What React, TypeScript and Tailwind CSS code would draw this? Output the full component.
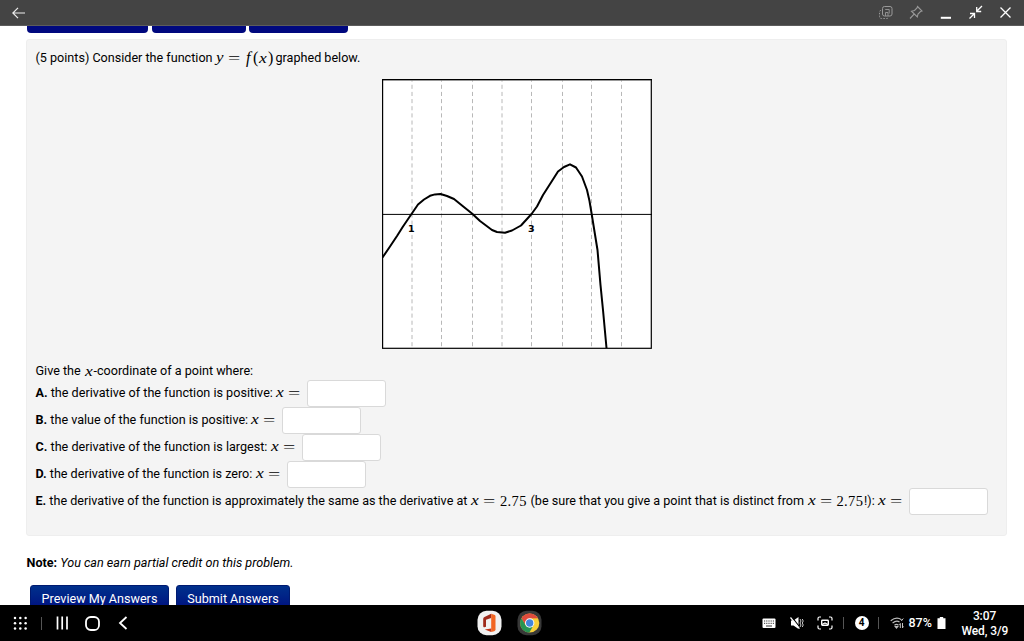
import React from "react";

function X({ className = "" }: { className?: string }) {
  return (
    <span className={"inline-block origin-left scale-x-[1.25] pt-px font-['Liberation_Serif',serif] text-[14px] italic " + className}>x</span>
  );
}

function Eq({ className = "" }: { className?: string }) {
  return (
    <span className={"inline-block origin-left scale-x-[1.55] pt-[2px] font-['Liberation_Serif',serif] text-[14px] " + className}>=</span>
  );
}

function Num({ className = "" }: { className?: string }) {
  return <span className={"shrink-0 font-['Liberation_Serif',serif] text-[14.5px] tracking-[0.35px] " + className}>2.75</span>;
}

type RowProps = { letter: string; text: string; label: string; width: string };

function AnswerRow({ letter, text, label, width }: RowProps) {
  return (
    <div className="flex h-[27px] items-center">
      <div className={"flex shrink-0 items-center pb-[2px] whitespace-pre " + width}>
        <span className="flex-1">
          <b className="font-bold">{letter}.</b> {text}
        </span>
        <X className="w-[12px]" />
        <Eq className="w-[19px]" />
      </div>
      <input aria-label={label} className="h-[27px] w-[79px] rounded-[3px] border border-[#d9d9d9] bg-white outline-none" />
    </div>
  );
}

const gridX = [30, 59.5, 90.5, 120, 149.5, 180.5, 209.5, 239.5];

function Graph() {
  return (
    <svg width="270" height="270" viewBox="0 0 270 270" className="block shrink-0">
      <rect x="0.6" y="0.6" width="268.7" height="268.7" fill="#fff" stroke="#000" strokeWidth="1.2" />
      {gridX.map((x) => (
        <line key={x} x1={x} x2={x} y1="-1.4" y2="268" stroke="#b8b8b8" strokeWidth="1" strokeDasharray="4.1 3.05" />
      ))}
      <path d="M0 .6H270" stroke="#000" strokeWidth="1.2" />
      <line x1="0" x2="270" y1="135.4" y2="135.4" stroke="#000" strokeWidth="1" />
      <path
        d="M.5 178.5L8 167.5L15 157L21 147.5L29.5 135L36 125.5L42 120.5L48 116.8L53 115.4L58.5 115L65 117L72 120L80 126.5L90 134.5L98 142L104 146.5L110 151L115 153L123 153.8L130 151.5L139 146.5L149.5 135L155 127.5L161 116L169 103.5L176 92.5L182 88L188 85.3L194 88.5L200 97.5L205 111L207.5 122L209.5 134L215.5 171L218.5 206L221 231L224.5 269"
        fill="none"
        stroke="#000"
        strokeWidth="2"
        strokeLinejoin="round"
      />
      <text x="29.3" y="153" textAnchor="middle" className="font-['DejaVu_Sans',sans-serif] text-[9.5px] font-bold">1</text>
      <text x="149.3" y="153" textAnchor="middle" className="font-['DejaVu_Sans',sans-serif] text-[9.5px] font-bold">3</text>
    </svg>
  );
}

function TitleBar() {
  return (
    <header className="flex h-[26px] shrink-0 items-center justify-between border-b border-[#5c5c5c] bg-[#444] pr-[11px] pl-[12px]">
      <svg width="14" height="14" viewBox="0 0 14 14" fill="none" stroke="#eee" strokeWidth="1.2">
        <path d="M13 7H1M6 1.8L.8 7L6 12.2" />
      </svg>
      <div className="flex items-center gap-[15px]">
        <svg width="15" height="15" viewBox="0 0 15 15" fill="none" stroke="#999" strokeWidth="1">
          <rect x="4.5" y="1.5" width="9.5" height="9.5" rx="2" />
          <path d="M7.2 4.5H11.2V8.5M7.5 11V7.5H10V11" strokeWidth=".9" />
          <path d="M2.8 5.5Q1.5 5.5 1.5 7V11.5Q1.5 13.5 3.5 13.5H8.5Q10.5 13.5 10.5 12" strokeDasharray="1.5 1.3" />
        </svg>
        <svg width="15" height="15" viewBox="0 0 15 15" fill="none" stroke="#999" strokeWidth="1.1">
          <path d="M9.5 1.5L14 6L12.5 6.5L10 9L9.3 12L3.5 6.2L6.5 5.5L9 3ZM6.1 9.2L2 13.5" />
        </svg>
        <svg width="15" height="15" viewBox="0 0 15 15" stroke="#fff" strokeWidth="2">
          <path d="M2.8 12.8H13" />
        </svg>
        <svg width="15" height="15" viewBox="0 0 15 15" fill="none" stroke="#fff" strokeWidth="1.3">
          <path d="M14 1L8.7 6.3M8.7 2V6.5H13.2M1.5 13.5L6.5 8.5M2 8.5H6.5V13" />
        </svg>
        <svg width="15" height="15" viewBox="0 0 15 15" fill="none" stroke="#fff" strokeWidth="1.3">
          <path d="M2.5 2.5L12.5 12.5M12.5 2.5L2.5 12.5" />
        </svg>
      </div>
    </header>
  );
}

function Taskbar() {
  return (
    <footer className="flex h-[36px] shrink-0 items-center bg-black font-[Roboto,sans-serif] text-white">
      <div className="flex w-[476.5px] items-center pl-[13px]">
        <svg width="15" height="15" viewBox="0 0 15 15" fill="#fff">
          {[2, 7.3, 12.6].flatMap((x) =>
            [2, 7.3, 12.6].map((y) => <circle key={x + "-" + y} cx={x} cy={y} r="1.25" />)
          )}
        </svg>
        <span className="ml-[13px] h-[13px] w-px bg-[#555]" />
        <svg className="ml-[14px]" width="12" height="14" viewBox="0 0 12 14" stroke="#fff" strokeWidth="1.7">
          <path d="M1.5 .5V13.5M6.2 .5V13.5M11 .5V13.5" />
        </svg>
        <svg className="ml-[17px]" width="15" height="15" viewBox="0 0 15 15" fill="none" stroke="#fff" strokeWidth="1.8">
          <rect x="1" y="1" width="13" height="13" rx="4.8" />
        </svg>
        <svg className="ml-[17.5px]" width="10" height="14" viewBox="0 0 10 14" fill="none" stroke="#fff" strokeWidth="1.8">
          <path d="M8.5 1L2 7L8.5 13" />
        </svg>
      </div>
      <div className="flex gap-[15px]">
        <svg width="25" height="26" viewBox="0 0 25 26">
          <rect x=".5" y=".8" width="24" height="24.4" rx="9" fill="#f1f1f1" />
          <path d="M14.2 3.8L7.5 7.1Q6.2 7.7 6.2 9V16Q6.2 17.6 7.5 17.2L9 16.7V9.7L14.2 8Z" fill="#9f2a1b" />
          <path d="M14.2 3.8L17.2 4.7Q18.5 5.1 18.5 6.4V19.6Q18.5 20.8 17.2 21.2L14.2 22Z" fill="#f26522" />
          <path d="M14.2 22L7.8 19.5L14.2 18.5Z" fill="#c3361c" />
        </svg>
        <svg width="25" height="26" viewBox="0 0 25 26">
          <rect x=".5" y=".8" width="24" height="24.4" rx="9" fill="#383838" />
          <circle cx="12.7" cy="13" r="9.6" fill="#f8cf38" />
          <path d="M4.4 8.2A9.6 9.6 0 0 1 21 8.2L12.7 8.5L8.5 15Z" fill="#df4b3d" />
          <path d="M4.4 8.2A9.6 9.6 0 0 0 12.4 22.6L16.7 15.1L8.7 15.2Z" fill="#279454" />
          <circle cx="12.7" cy="13" r="4.7" fill="#fff" />
          <circle cx="12.7" cy="13" r="3.7" fill="#4285dc" />
        </svg>
      </div>
      <div className="ml-auto flex items-center pr-[16.5px]">
        <svg width="14" height="11" viewBox="0 0 14 11">
          <rect x=".5" y=".5" width="13" height="9.5" rx="1" fill="#fff" />
          <path d="M2 3H12M2 5.3H12" stroke="#333" strokeWidth="1" strokeDasharray="1.2 1" />
          <path d="M4 8H10" stroke="#333" strokeWidth="1" />
        </svg>
        <svg className="ml-[14px]" width="14" height="14" viewBox="0 0 14 14">
          <path d="M1 4.5H3.5L8.5 1V13L3.5 9.5H1Z" fill="#fff" />
          <path d="M1.8 .8L10 11.5" stroke="#000" strokeWidth="1.2" />
          <path d="M.5 1.5L9.5 12.7" stroke="#fff" strokeWidth="1.2" />
          <path d="M10 3L11 5L10 7L11 9L10 11M12.3 3L13.2 5L12.3 7L13.2 9L12.3 11" fill="none" stroke="#ddd" strokeWidth=".9" />
        </svg>
        <svg className="ml-[13px]" width="16" height="14" viewBox="0 0 16 14" fill="none" stroke="#fff" strokeWidth="1.2">
          <path d="M4 1H2.5Q1 1 1 2.5V4.5M12 1H13.5Q15 1 15 2.5V4.5M1 9.5V11.5Q1 13 2.5 13H4M15 9.5V11.5Q15 13 13.5 13H12" />
          <rect x="4.7" y="4.2" width="6.6" height="5" rx=".7" strokeWidth="1.4" />
          <path d="M5 8.5L8 7L11 8.5" />
        </svg>
        <span className="ml-[10px] h-[12px] w-px bg-[#555]" />
        <span className="ml-[11px] flex h-[14px] w-[14px] items-center justify-center rounded-full bg-white text-[10px] font-bold text-black">4</span>
        <span className="ml-[9px] h-[12px] w-px bg-[#555]" />
        <svg className="ml-[11px]" width="14" height="12" viewBox="0 0 14 12" fill="none" stroke="#bbb" strokeWidth="1.2">
          <path d="M.7 3.8Q6.5-.8 11.5 2.8M2.6 6Q6.5 2.8 9.5 5M4.5 8.2Q6.5 6.5 8.5 8.2" />
          <path d="M5.3 9.5H7.7L6.5 11Z" fill="#ddd" />
          <path d="M10.3 11V6.5L9.3 7.7M12.5 6V10.8L13.5 9.5M11.3 4L13.3 1.5" stroke="#ddd" strokeWidth=".9" />
        </svg>
        <span className="ml-[5px] w-[24px] text-[12.5px] leading-4 font-medium whitespace-nowrap">87%</span>
        <svg className="ml-[4px]" width="9" height="12" viewBox="0 0 9 12" fill="#fff">
          <path d="M2.8 0H6.2V1.2H8.5V12H.5V1.2H2.8Z" />
        </svg>
        <div className="ml-[16px] w-[46px] pt-[1px] text-center text-[12px] leading-[15px] font-medium whitespace-nowrap tracking-[-0.1px]">
          <div>3:07</div>
          <div>Wed, 3/9</div>
        </div>
      </div>
    </footer>
  );
}

export default function App() {
  return (
    <div className="flex h-[641px] w-[1024px] flex-col overflow-hidden bg-white font-[Roboto,sans-serif] text-[12.6px] leading-[18px] text-black">
      <TitleBar />
      <main className="flex min-h-0 flex-1 flex-col overflow-hidden pl-[26px]">
        <div className="flex h-[13px] shrink-0 items-start gap-[3.5px] pl-px">
          <div className="h-[7px] w-[121px] rounded-b-[4px] bg-[#00087e]" />
          <div className="h-[7px] w-[94px] rounded-b-[4px] bg-[#00087e]" />
          <div className="h-[7px] w-[99px] rounded-b-[4px] bg-[#00087e]" />
        </div>
        <section className="h-[497px] w-[981px] shrink-0 rounded-[3px] border border-[#eee] bg-[#f4f4f4] pt-[9px] pl-[8.5px]">
          <div className="flex h-[18px] items-center whitespace-nowrap">
            <span className="w-[180.5px]">(5 points) Consider the function</span>
            <span className="inline-block w-[12px] origin-left scale-x-[1.2] font-['Liberation_Serif',serif] text-[14px] italic">y</span>
            <Eq className="w-[18px]" />
            <span className="flex w-[29.5px] font-['Liberation_Serif',serif] text-[16px]">
              <i className="w-[7px]">f</i>
              <span className="w-[5.5px]">(</span>
              <X className="w-[9.5px]" />
              <span>)</span>
            </span>
            <span>graphed below.</span>
          </div>
          <div className="mt-[12px] flex justify-center pr-[8px]">
            <Graph />
          </div>
          <div className="mt-[13px] flex h-[18px] items-center whitespace-pre">
            <span className="w-[49px]">Give the </span>
            <X className="w-[9px]" />
            <span>-coordinate of a point where:</span>
          </div>
          <AnswerRow letter="A" text="the derivative of the function is positive:" label="Answer A" width="w-[271.5px]" />
          <AnswerRow letter="B" text="the value of the function is positive:" label="Answer B" width="w-[246.5px]" />
          <AnswerRow letter="C" text="the derivative of the function is largest:" label="Answer C" width="w-[266.5px]" />
          <AnswerRow letter="D" text="the derivative of the function is zero:" label="Answer D" width="w-[251.5px]" />
          <div className="flex h-[27px] items-center whitespace-nowrap">
            <div className="flex shrink-0 items-center pb-[2px]">
              <span className="w-[435px] shrink-0">
                <b className="font-bold">E.</b> the derivative of the function is approximately the same as the derivative at
              </span>
              <X className="w-[12.5px]" />
              <Eq className="w-[17px]" />
              <Num className="w-[30.5px]" />
              <span className="w-[277px] shrink-0">(be sure that you give a point that is distinct from</span>
              <X className="w-[12px]" />
              <Eq className="w-[17px]" />
              <Num className="w-[27.5px]" />
              <span className="w-[14px]">!):</span>
              <X className="w-[12px]" />
              <Eq className="w-[19px]" />
            </div>
            <input aria-label="Answer E" className="h-[27px] w-[79px] rounded-[3px] border border-[#d9d9d9] bg-white outline-none" />
          </div>
        </section>
        <p className="mt-[18px] h-[18px] shrink-0 pl-[0.5px] whitespace-nowrap">
          <b className="font-bold">Note:</b> <i>You can earn partial credit on this problem.</i>
        </p>
        <div className="mt-[13px] flex shrink-0 gap-[7px] pl-[4px]">
          <button className="h-[27px] w-[139px] rounded-[3px] border border-[#001a70] bg-linear-to-b from-[#00308c] to-[#00087e] text-[12.6px] whitespace-nowrap text-white">Preview My Answers</button>
          <button className="h-[27px] w-[114px] rounded-[3px] border border-[#001a70] bg-linear-to-b from-[#00308c] to-[#00087e] text-[12.6px] whitespace-nowrap text-white">Submit Answers</button>
        </div>
      </main>
      <Taskbar />
    </div>
  );
}
